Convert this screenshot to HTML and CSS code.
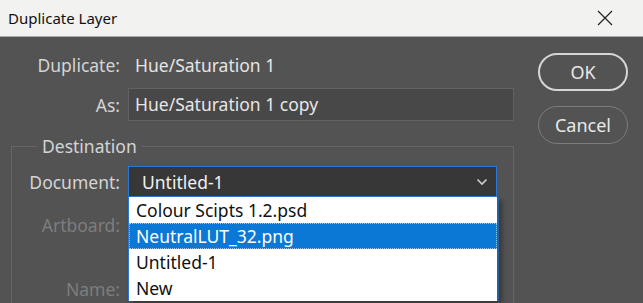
FILE: index.html
```html
<!DOCTYPE html>
<html>
<head>
<meta charset="utf-8">
<link rel="stylesheet" href="styles.css">
</head>
<body>
<div class="window">
  <div class="titlebar">
    <span class="title">Duplicate Layer</span>
    <svg class="close" width="16" height="16" viewBox="0 0 16 16"><path d="M1 1 L15 15 M15 1 L1 15" stroke="#222" stroke-width="1.2" fill="none"/></svg>
  </div>
  <div class="content">
    <div class="main">
      <div class="row row-dup">
        <span class="label">Duplicate:</span>
        <span class="value">Hue/Saturation 1</span>
      </div>
      <div class="row row-as">
        <span class="label">As:</span>
        <div class="input">Hue/Saturation 1 copy</div>
      </div>
      <fieldset class="dest">
        <legend>Destination</legend>
        <div class="row row-doc">
          <span class="label">Document:</span>
          <div class="select">
            <span>Untitled-1</span>
            <svg class="chev" width="12" height="8" viewBox="0 0 12 8"><path d="M1.5 1.5 L6 6 L10.5 1.5" stroke="#cfcfcf" stroke-width="1.6" fill="none"/></svg>
          </div>
          <ul class="list">
            <li>Colour Scipts 1.2.psd</li>
            <li class="sel">NeutralLUT_32.png</li>
            <li>Untitled-1</li>
            <li>New</li>
          </ul>
        </div>
        <div class="row row-art">
          <span class="label disabled">Artboard:</span>
        </div>
        <div class="row row-name">
          <span class="label disabled">Name:</span>
        </div>
      </fieldset>
    </div>
    <div class="buttons">
      <div class="btn primary">OK</div>
      <div class="btn">Cancel</div>
    </div>
  </div>
</div>
</body>
</html>
```
FILE: styles.css
```css
html, body {
  margin: 0;
  padding: 0;
}
body {
  width: 643px;
  height: 303px;
  overflow: hidden;
  background: #535353;
  font-family: "Noto Sans", "Open Sans", sans-serif;
}
.window {
  width: 643px;
  height: 303px;
  display: flex;
  flex-direction: column;
}
.titlebar {
  height: 36px;
  flex: none;
  background: #f2f2f0;
  border-bottom: 1px solid #a9a9a9;
  display: flex;
  align-items: center;
  justify-content: space-between;
  padding: 0 30px 0 8px;
}
.title {
  font-size: 15px;
  color: #111;
  font-family: "Noto Sans", sans-serif;
}
.close {
  display: block;
}
.content {
  flex: 1;
  display: flex;
  background: #535353;
}
.main {
  width: 514px;
  padding-top: 11px;
}
.row {
  display: flex;
  align-items: center;
  gap: 8px;
}
.label {
  width: 120px;
  text-align: right;
  font-size: 17.5px;
  color: #d4d4d4;
  flex: none;
}
.label.disabled {
  color: #7d7d7d;
}
.value {
  font-size: 17.5px;
  color: #e4e4e4;
  padding-left: 7px;
}
.row-dup {
  height: 34px;
}
.row-as {
  margin-top: 6px;
  height: 33px;
}
.input {
  flex: 1;
  box-sizing: border-box;
  height: 33px;
  background: #484848;
  border: 1px solid #626262;
  color: #e6e6e6;
  font-size: 17.5px;
  line-height: 31px;
  padding-left: 6px;
}
.dest {
  margin: 14px 0 0 11px;
  padding: 0;
  border: 1px solid #666666;
  height: 170px;
  box-sizing: border-box;
  min-width: 0;
}
.dest legend {
  margin-left: 25px;
  padding: 0 5px;
  font-size: 17.5px;
  color: #d4d4d4;
  line-height: 22px;
}
.dest .label {
  width: 108px;
}
.row-doc {
  position: relative;
  margin-top: 9px;
  height: 31px;
}
.select {
  width: 369px;
  height: 31px;
  box-sizing: border-box;
  background: #373737;
  border: 1px solid #2a78d6;
  display: flex;
  align-items: center;
  justify-content: space-between;
  padding: 0 8px 0 13px;
  color: #f0f0f0;
  font-size: 17.5px;
}
.chev {
  display: block;
}
.list {
  position: absolute;
  left: 116px;
  top: 31px;
  width: 371px;
  margin: 0;
  padding: 0;
  list-style: none;
  background: #ffffff;
  border-left: 1px solid #2a78d6;
  border-right: 2px solid #2a5f9e;
  box-sizing: border-box;
  box-shadow: 3px 3px 5px rgba(0,0,0,0.35);
  z-index: 5;
}
.list li {
  height: 26px;
  line-height: 26px;
  padding-left: 7px;
  font-size: 17.5px;
  color: #111;
  box-sizing: border-box;
}
.list li.sel {
  background: #0a78d4;
  color: #ffffff;
  border: 1px dotted #9cc6ef;
  line-height: 24px;
  padding-left: 6px;
}
.row-art {
  margin-top: 12px;
  height: 31px;
}
.row-name {
  margin-top: 33px;
  height: 31px;
}
.buttons {
  display: flex;
  flex-direction: column;
  gap: 15px;
  padding: 16px 0 0 24px;
}
.btn {
  width: 90px;
  height: 38px;
  box-sizing: border-box;
  border-radius: 19px;
  border: 1.5px solid #7c7c7c;
  display: flex;
  align-items: center;
  justify-content: center;
  color: #e8e8e8;
  font-size: 18px;
}
.btn.primary {
  border: 2px solid #d6d6d6;
}
```
